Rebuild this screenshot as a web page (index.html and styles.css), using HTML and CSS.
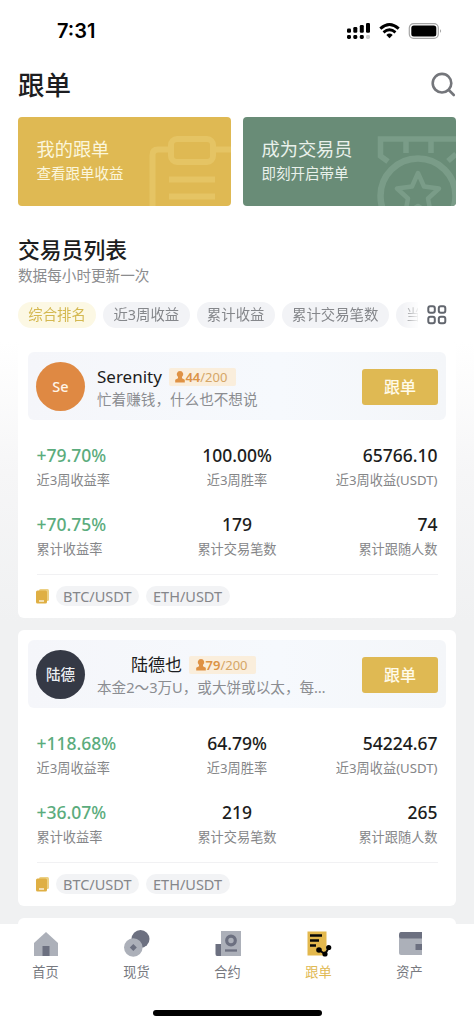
FILE: index.html
```html
<!DOCTYPE html>
<html lang="zh-CN">
<head>
<meta charset="utf-8">
<title>跟单</title>
<link rel="stylesheet" href="styles.css">
</head>
<body>
<div class="app">
  <header class="status">
    <span class="time">7:31</span>
    <svg class="status-icons" width="97" height="18" viewBox="0 0 97 18">
      <rect x="1" y="6.5" width="4" height="4.2" rx="1.2"/><rect x="7.3" y="5" width="4" height="5.7" rx="1.2"/><rect x="13.8" y="3" width="4" height="7.7" rx="1.2"/><rect x="20" y="1" width="4" height="9.7" rx="1.2"/>
      <rect x="1" y="13" width="4" height="4" rx="1.4"/><rect x="7.3" y="13" width="4" height="4" rx="1.4"/><rect x="13.8" y="13" width="4" height="4" rx="1.4"/><rect x="20" y="13" width="4" height="4" rx="1.4" fill="#ccc"/>
      <path d="M34.3 6.6Q43.500-1.600 52.700 6.600" fill="none" stroke="#000" stroke-width="2.900"/>
      <path d="M37.500 10.300Q43.500 5.300 49.500 10.300" fill="none" stroke="#000" stroke-width="2.800"/>
      <path d="M40.300 12.900Q43.500 10.300 46.700 12.900L43.500 16.200Z"/>
      <rect x="63.300" y="1.600" width="29" height="14.800" rx="4.300" fill="none" stroke="#a6a6a6" stroke-width="1.200"/>
      <rect x="65.300" y="3.600" width="25" height="10.800" rx="2.500"/>
      <path d="M94.300 7Q96 9 94.300 11Z" fill="#777"/>
    </svg>
  </header>

  <div class="topbar">
    <h1>跟单</h1>
    <svg width="26" height="26" viewBox="0 0 26 26" fill="none" stroke="#74767b" stroke-width="2.600" stroke-linecap="round"><circle cx="12" cy="11.200" r="9.300"/><path d="M18.800 18l5 5"/></svg>
  </div>

  <section class="banners">
    <div class="banner gold">
      <svg class="art" width="82" height="70" viewBox="0 0 82 70" fill="none" stroke="#e5c464" stroke-width="6">
        <path d="M3.500 70V19Q3.500 13.500 9 13.500H20M66 13.500H82M20 43.500H66M20 60.500H66"/>
        <rect x="22" y="3" width="42" height="23" rx="6"/>
      </svg>
      <h2>我的跟单</h2>
      <p>查看跟单收益</p>
    </div>
    <div class="banner green">
      <svg class="art" width="79" height="70" viewBox="0 0 79 70" fill="none" stroke="#7a9c88" stroke-width="5.500">
        <path d="M11 25.500L3.500 20V3H79M29 3V17M54 3V17M79 18L71 25"/>
        <circle cx="41" cy="60" r="37.500" stroke-width="6.500"/>
        <path d="M41 37l6 13.500 15 2-11 10 3 15.500-13-8-13 8 3-15.500-11-10 15-2z" stroke-width="4.500" stroke-linejoin="round"/>
      </svg>
      <h2>成为交易员</h2>
      <p>即刻开启带单</p>
    </div>
  </section>

  <section class="heading">
    <h2>交易员列表</h2>
    <p>数据每小时更新一次</p>
  </section>

  <nav class="filters">
    <div class="chips">
      <span class="chip active">综合排名</span><span class="chip">近3周收益</span><span class="chip">累计收益</span><span class="chip">累计交易笔数</span><span class="chip">当</span>
    </div>
    <svg width="20" height="20" viewBox="0 0 20 20" fill="none" stroke="#62666e" stroke-width="2"><rect x="1.300" y="1.300" width="6.500" height="6.500" rx="2"/><rect x="11.800" y="1.300" width="6.500" height="6.500" rx="2"/><rect x="1.300" y="11.800" width="6.500" height="6.500" rx="2"/><rect x="11.800" y="11.800" width="6.500" height="6.500" rx="2"/></svg>
  </nav>

  <main class="list">
    <article class="card">
      <div class="trader">
        <div class="avatar">Se</div>
        <div class="info">
          <div class="name-row"><span class="name">Serenity</span><span class="seats"><svg width="10" height="12" viewBox="0 0 10 12"><path d="M5 0a3.300 3.300 0 0 1 2 5.900V7.300L9.800 8.700V11.500H.2V8.700L3 7.300V5.900A3.300 3.300 0 0 1 5 0z"/></svg><b>44</b>/200</span></div>
          <p class="bio">忙着赚钱，什么也不想说</p>
        </div>
        <button class="follow">跟单</button>
      </div>
      <div class="stats">
        <div class="stat"><b class="up">+79.70%</b><span>近3周收益率</span></div>
        <div class="stat"><b>100.00%</b><span>近3周胜率</span></div>
        <div class="stat"><b>65766.10</b><span>近3周收益(USDT)</span></div>
        <div class="stat"><b class="up">+70.75%</b><span>累计收益率</span></div>
        <div class="stat"><b>179</b><span>累计交易笔数</span></div>
        <div class="stat"><b>74</b><span>累计跟随人数</span></div>
      </div>
      <div class="pairs"><svg width="13" height="15" viewBox="0 0 13 15"><rect x="3" y="0" width="10" height="12" rx="1.500" fill="#ecd084"/><rect x="0" y="1.500" width="11" height="13" rx="1.500" fill="#dfaf43"/><path d="M3 12H8" stroke="#fff" stroke-width="1.200"/></svg><span>BTC/USDT</span><span>ETH/USDT</span></div>
    </article>

    <article class="card">
      <div class="trader">
        <div class="avatar dark">陆德</div>
        <div class="info">
          <div class="name-row"><span class="name indent">陆德也</span><span class="seats"><svg width="10" height="12" viewBox="0 0 10 12"><path d="M5 0a3.300 3.300 0 0 1 2 5.900V7.300L9.800 8.700V11.500H.2V8.700L3 7.300V5.900A3.300 3.300 0 0 1 5 0z"/></svg><b>79</b>/200</span></div>
          <p class="bio">本金2～3万U，或大饼或以太，每…</p>
        </div>
        <button class="follow">跟单</button>
      </div>
      <div class="stats">
        <div class="stat"><b class="up">+118.68%</b><span>近3周收益率</span></div>
        <div class="stat"><b>64.79%</b><span>近3周胜率</span></div>
        <div class="stat"><b>54224.67</b><span>近3周收益(USDT)</span></div>
        <div class="stat"><b class="up">+36.07%</b><span>累计收益率</span></div>
        <div class="stat"><b>219</b><span>累计交易笔数</span></div>
        <div class="stat"><b>265</b><span>累计跟随人数</span></div>
      </div>
      <div class="pairs"><svg width="13" height="15" viewBox="0 0 13 15"><rect x="3" y="0" width="10" height="12" rx="1.500" fill="#ecd084"/><rect x="0" y="1.500" width="11" height="13" rx="1.500" fill="#dfaf43"/><path d="M3 12H8" stroke="#fff" stroke-width="1.200"/></svg><span>BTC/USDT</span><span>ETH/USDT</span></div>
    </article>

    <article class="card"></article>
  </main>

  <footer class="tabbar">
    <div class="tabs">
      <div class="tab"><svg width="28" height="28" viewBox="0 0 28 28"><path d="M14 2L26 13V26H2V13Z" fill="#acb0b9"/><rect x="10.500" y="16" width="7" height="10" fill="#6c7080"/></svg>首页</div>
      <div class="tab"><svg width="28" height="28" viewBox="0 0 28 28"><circle cx="17.500" cy="9" r="9" fill="#6c7080"/><circle cx="10.300" cy="17.500" r="9.300" fill="#acb0b9"/><path d="M10.300 14l3.500 3.500-3.500 3.500-3.500-3.500z" fill="#6c7080"/></svg>现货</div>
      <div class="tab"><svg width="28" height="28" viewBox="0 0 28 28"><path d="M7 1H27V26H7Z" fill="#acb0b9"/><path d="M1.500 14H7V26H3Q1.500 26 1.500 24Z" fill="#6c7080"/><circle cx="17" cy="10.500" r="4.300" fill="none" stroke="#6c7080" stroke-width="3.200"/><path d="M11 20.500H23" stroke="#6c7080" stroke-width="2.300"/></svg>合约</div>
      <div class="tab active"><svg width="28" height="28" viewBox="0 0 28 28"><rect x="2.500" y="1.500" width="19" height="24" fill="#e3b84d"/><path d="M5 5.500H17M5 10.500H14M5 15.500H11" stroke="#080808" stroke-width="2.400"/><path d="M14 20L20 24L24 17.500" fill="none" stroke="#080808" stroke-width="2"/><circle cx="14" cy="20" r="2.800"/><circle cx="20" cy="24" r="2.600"/><circle cx="23.700" cy="17.500" r="2.600"/></svg>跟单</div>
      <div class="tab"><svg width="28" height="28" viewBox="0 0 28 28"><path d="M3 5H26V25H5Q3 25 3 23Z" fill="#acb0b9"/><path d="M5 2H26V8.500H5Q3 8.500 3 5.300Q3 2 5 2Z" fill="#6c7080"/><rect x="19.500" y="14" width="6.500" height="6" fill="#6c7080"/></svg>资产</div>
    </div>
    <div class="home-indicator"></div>
  </footer>
</div>
</body>
</html>
```
FILE: styles.css
```css
* { box-sizing: border-box; margin: 0; padding: 0; }

body {
  font-family: "Noto Sans", "Noto Sans CJK SC", sans-serif;
  background: #fff;
  color: #1c1d20;
}

.app {
  width: 474px;
  height: 1026px;
  display: flex;
  flex-direction: column;
  overflow: hidden;
}

.status {
  height: 62px;
  display: flex;
  align-items: center;
  justify-content: space-between;
  padding: 0 31px 0 57px;
  flex: none;
}

.time {
  font: 600 20px/24px Inter, sans-serif;
  color: #000;
}

.topbar {
  height: 55px;
  padding: 0 18px;
  display: flex;
  align-items: center;
  justify-content: space-between;
  flex: none;
}

.topbar svg { margin-bottom: 9px; }

.topbar h1 {
  font-size: 26.500px;
  font-weight: 500;
  line-height: 40px;
  margin-bottom: 9px;
}

.banners {
  display: grid;
  grid-template-columns: 1fr 1fr;
  gap: 12px;
  padding: 0 18px;
  height: 89px;
  flex: none;
}

.banner {
  position: relative;
  overflow: hidden;
  border-radius: 4px;
  padding: 18px 18.500px;
  color: #fbf6dc;
}

.gold { background: #dfb953; }
.green { background: #698c77; color: #e9f1eb; }

.art {
  position: absolute;
  right: 0;
  bottom: 0;
}

.banner h2 {
  position: relative;
  font-size: 18.2px;
  font-weight: 400;
  line-height: 28px;
  height: 27px;
}

.banner p {
  position: relative;
  font-size: 14.500px;
  line-height: 23px;
}

.heading {
  height: 90px;
  padding: 30px 18px 0;
  flex: none;
}

.heading h2 {
  font-size: 21.800px;
  font-weight: 500;
  line-height: 27px;
  height: 28px;
}

.heading p {
  font-size: 14.600px;
  line-height: 23px;
  color: #8b8c8e;
}

.filters {
  display: flex;
  align-items: center;
  justify-content: space-between;
  height: 40px;
  padding: 0 27px 2px 18px;
  margin-bottom: 6px;
  flex: none;
}

.chips {
  display: flex;
  gap: 7px;
  width: 400px;
  overflow: hidden;
  -webkit-mask-image: linear-gradient(to right, #000 384px, transparent 402px);
  mask-image: linear-gradient(to right, #000 384px, transparent 402px);
}

.chip {
  flex: none;
  height: 26px;
  line-height: 25px;
  padding: 0 10.300px;
  border-radius: 13px;
  background: #f2f3f6;
  color: #85878b;
  font-size: 14.400px;
}

.chip.active { background: #fcf8e4; color: #d4b850; }

.list {
  flex: 1;
  min-height: 0;
  overflow: hidden;
  display: flex;
  flex-direction: column;
  gap: 12px;
  padding: 0 18px;
  background: linear-gradient(#fff 0, #f6f6f7 130px, #f0f1f2 280px);
}

.card {
  flex: none;
  height: 276px;
  padding: 10px;
  border-radius: 6px;
  background: #fff;
}

.trader {
  height: 68px;
  display: flex;
  align-items: center;
  gap: 12px;
  padding: 0 8px;
  border-radius: 6px;
  background: linear-gradient(90deg, #f5f6fa, #f6f9fd 60%, #f4f6f9);
}

.avatar {
  flex: none;
  width: 49px;
  height: 49px;
  border-radius: 50%;
  background: #df8943;
  color: #fff5e7;
  font-size: 14.500px;
  font-weight: 500;
  line-height: 49px;
  text-align: center;
}

.avatar.dark { background: #353945; color: #eceef2; }

.info {
  flex: 1;
  min-width: 0;
  height: 47px;
  padding-top: 3px;
}

.name-row {
  display: flex;
  align-items: center;
  gap: 7px;
  height: 22px;
}

.name { font-size: 17px; line-height: 22px; }
.name.indent { padding-left: 34px; }

.seats {
  display: flex;
  align-items: center;
  width: 67px;
  height: 18px;
  padding-left: 6.500px;
  border-radius: 2px;
  background: #faeedc;
  color: #d5a666;
  font-size: 13px;
  line-height: 18px;
}

.seats svg { fill: #df9244; }
.seats b { font-weight: 600; color: #dc9346; }

.bio {
  font-size: 14.600px;
  line-height: 23px;
  color: #8b8d91;
  white-space: nowrap;
}

.follow {
  width: 76px;
  height: 36px;
  margin-top: 1px;
  border: 0;
  border-radius: 3px;
  background: #dfb953;
  color: #fffbea;
  font: 500 16px/34px "Noto Sans", "Noto Sans CJK SC", sans-serif;
}

.stats {
  display: grid;
  grid-template-columns: 120px 1fr 120px;
  row-gap: 19px;
  margin: 0 8.500px;
  padding: 22px 0 13px;
  border-bottom: 1px solid #f1f1f3;
}

.stat {
  display: flex;
  flex-direction: column;
  align-items: center;
  height: 50px;
  white-space: nowrap;
}

.stat:nth-child(3n + 1) { align-items: flex-start; }
.stat:nth-child(3n) { align-items: flex-end; }

.stat b {
  font-size: 17.500px;
  font-weight: 500;
  line-height: 26px;
  height: 26px;
}

.stat .up { color: #5bac7d; }

.stat span {
  font-size: 13.200px;
  line-height: 24px;
  color: #858688;
}

.pairs {
  display: flex;
  align-items: center;
  gap: 6.500px;
  height: 42px;
  padding: 0 8px;
}

.pairs span {
  height: 20px;
  padding: 0 7.500px;
  border-radius: 10px;
  background: #f2f3f5;
  color: #85868a;
  font-size: 14.500px;
  line-height: 20px;
}

.tabbar {
  flex: none;
  height: 102px;
  display: flex;
  flex-direction: column;
  align-items: center;
  background: #fff;
}

.tabs {
  width: 100%;
  height: 86px;
  padding: 6px 19px 0 0;
  display: grid;
  grid-template-columns: repeat(5, 1fr);
}

.tab {
  display: flex;
  flex-direction: column;
  align-items: center;
  gap: 4px;
  color: #77797f;
  font-size: 13.200px;
  line-height: 20px;
}

.tab.active { color: #dfb953; }

.home-indicator {
  width: 169px;
  height: 6px;
  border-radius: 3px;
  background: #000;
}
```
